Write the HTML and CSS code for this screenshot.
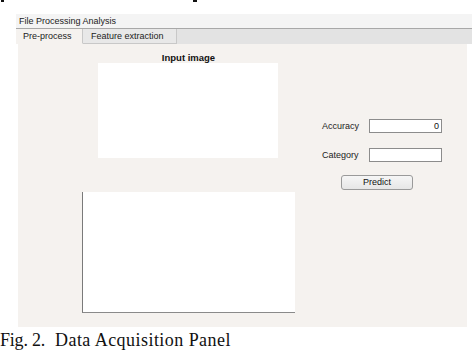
FILE: index.html
```html
<!DOCTYPE html>
<html>
<head>
<meta charset="utf-8">
<link rel="stylesheet" href="styles.css">
</head>
<body>
<div class="page">
  <div class="scrap"><span class="dot d1"></span><span class="dot d2"></span></div>
  <div class="app">
    <div class="menubar"><span>File</span> <span>Processing</span> <span>Analysis</span></div>
    <div class="tabbar">
      <div class="tab active">Pre-process</div>
      <div class="tab">Feature extraction</div>
    </div>
    <div class="panel">
      <div class="left">
        <div class="title">Input image</div>
        <div class="box1"></div>
        <div class="box2"></div>
      </div>
      <div class="right">
        <div class="row"><span class="label">Accuracy</span><div class="field num">0</div></div>
        <div class="row"><span class="label">Category</span><div class="field"></div></div>
        <div class="button">Predict</div>
      </div>
    </div>
  </div>
  <div class="caption"><span class="fig">Fig. 2.</span><span>Data Acquisition Panel</span></div>
</div>
</body>
</html>
```

FILE: styles.css
```css
html, body {
  margin: 0;
  padding: 0;
  background: #ffffff;
}
.page {
  width: 474px;
  height: 353px;
  overflow: hidden;
  font-family: "Liberation Sans", Arial, sans-serif;
  font-size: 9px;
  color: #111;
}
.scrap {
  height: 14px;
  display: flex;
  align-items: flex-start;
}
.dot {
  display: block;
  width: 3px;
  height: 2px;
  background: #111;
}
.d1 { margin-left: 1px; }
.d2 { margin-left: 189px; width: 4px; }
.app {
  margin-left: 16px;
  width: 456px;
}
.menubar {
  height: 14px;
  line-height: 14px;
  background: #f4f4f4;
  padding-left: 3px;
  color: #222;
}
.tabbar {
  height: 15px;
  border-top: 1px solid #a8a8a8;
  background: #e3e3e3;
  display: flex;
}
.tab {
  height: 14px;
  line-height: 14px;
  border-right: 1px solid #c8c8c8;
  border-bottom: 1px solid #c8c8c8;
  background: #e8e8e8;
  padding: 0 12px 0 8px;
  color: #222;
}
.tab.active {
  width: 52px;
  background: #f5f2ef;
  border-bottom: 1px solid #f5f2ef;
  padding: 0 7px 0 7px;
}
.panel {
  margin-left: 2px;
  width: 449px;
  height: 283px;
  background: #f5f2ef;
  display: flex;
  padding-left: 64px;
  box-sizing: border-box;
}
.left {
  width: 213px;
  display: flex;
  flex-direction: column;
}
.title {
  padding-top: 8px;
  height: 11px;
  line-height: 11px;
  font-weight: bold;
  font-size: 9.5px;
  text-align: center;
  color: #111;
}
.box1 {
  margin-left: 16px;
  width: 180px;
  height: 95px;
  background: #ffffff;
}
.box2 {
  margin-top: 34px;
  width: 212px;
  height: 120px;
  background: #ffffff;
  border-left: 1px solid #7a7a7a;
  border-bottom: 1px solid #8a8a8a;
}
.right {
  margin-left: 27px;
  padding-top: 75px;
  display: flex;
  flex-direction: column;
}
.row {
  display: flex;
  align-items: center;
  height: 14px;
  margin-bottom: 15px;
}
.label {
  width: 47px;
  color: #222;
}
.field {
  width: 69px;
  height: 12px;
  line-height: 12px;
  background: #ffffff;
  border: 1px solid #8c8c8c;
  text-align: right;
  padding-right: 2px;
  box-sizing: content-box;
}
.button {
  margin-top: -2px;
  margin-left: 19px;
  width: 70px;
  height: 13px;
  line-height: 13px;
  border: 1px solid #9a9a9a;
  border-radius: 3px;
  background: linear-gradient(#f6f6f6, #e6e6e6);
  text-align: center;
  color: #111;
}
.caption {
  margin-top: 4px;
  display: flex;
  font-family: "Liberation Serif", "Times New Roman", serif;
  font-size: 18px;
  line-height: 18px;
  color: #111;
}
.fig {
  width: 55px;
  letter-spacing: -0.2px;
}
.caption span:last-child {
  letter-spacing: 0.45px;
}
```
